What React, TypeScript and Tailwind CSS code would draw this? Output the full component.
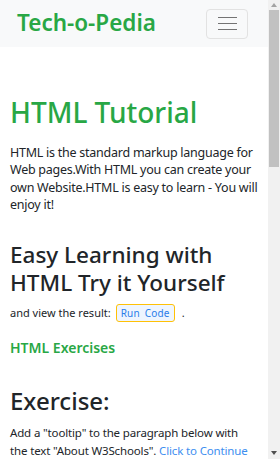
function Scrollbar() {
  return (
    <div className="flex h-full w-[12px] shrink-0 flex-col items-center bg-[#f1f1f1]">
      <div className="flex h-[10px] w-full items-center justify-center">
        <svg width="6" height="4" viewBox="0 0 6 4">
          <path d="M0 4 L3 0 L6 4 Z" fill="#a3a3a3" />
        </svg>
      </div>
      <div className="h-[157px] w-[10px] bg-[#c1c1c1]" />
      <div className="flex-1" />
      <div className="flex h-[12px] w-full items-center justify-center">
        <svg width="6" height="4" viewBox="0 0 6 4">
          <path d="M0 0 L6 0 L3 4 Z" fill="#505050" />
        </svg>
      </div>
    </div>
  )
}

export default function App() {
  return (
    <div className="flex h-[459px] overflow-hidden bg-white text-[#212529]" style={{ fontFamily: '"Segoe UI", "Noto Sans", sans-serif' }}>
      <div className="min-w-0 flex-1">
        <nav className="flex h-[47px] items-center justify-between bg-[#f8f9fa] pr-[20px] pl-[17px]">
          <a className="text-[22.5px] leading-none font-semibold text-[#28a745]">Tech-o-Pedia</a>
          <button type="button" className="flex h-[30px] w-[42px] flex-col items-center justify-center gap-[4.5px] rounded-[4px] border border-[#e2e2e2]">
            <span className="block h-[1.5px] w-[19px] bg-[#737373]" />
            <span className="block h-[1.5px] w-[19px] bg-[#737373]" />
            <span className="block h-[1.5px] w-[19px] bg-[#737373]" />
          </button>
        </nav>

        <main className="px-[10px] pt-[47px]">
          <h1 className="text-[28px] leading-[36px] font-medium text-[#28a745]">HTML Tutorial</h1>
          <p className="mt-[13.5px] text-[12.5px] leading-[17.5px] tracking-[-0.25px]">
            HTML is the standard markup language for Web pages.With HTML you can create your own Website.HTML is easy to learn - You will enjoy it!
          </p>

          <h2 className="mt-[27px] text-[22.5px] leading-[28px] font-medium">Easy Learning with HTML Try it Yourself</h2>
          <p className="mt-[7px] flex h-[18px] items-center text-[11px] leading-[18px]">
            and view the result:
            <span className="ml-[5px] flex h-[18px] items-center rounded-[3px] border border-[#ffc107] bg-[#eef5ff] px-[4px] text-[10px] tracking-[0.2px] [word-spacing:2px] text-[#2b7de9]">Run Code</span>
            <span className="ml-[7px]">.</span>
          </p>

          <h5 className="mt-[16px] text-[14px] leading-[20px] font-semibold text-[#28a745]">HTML Exercises</h5>

          <h2 className="mt-[28px] text-[24px] leading-[30px] font-medium">Exercise:</h2>
          <p className="mt-[8px] text-[11.5px] leading-[18px] tracking-[-0.15px]">
            Add a "tooltip" to the paragraph below with the text "About W3Schools". <a className="text-[#3d8ef0]">Click to Continue</a>
          </p>
        </main>
      </div>
      <Scrollbar />
    </div>
  )
}
